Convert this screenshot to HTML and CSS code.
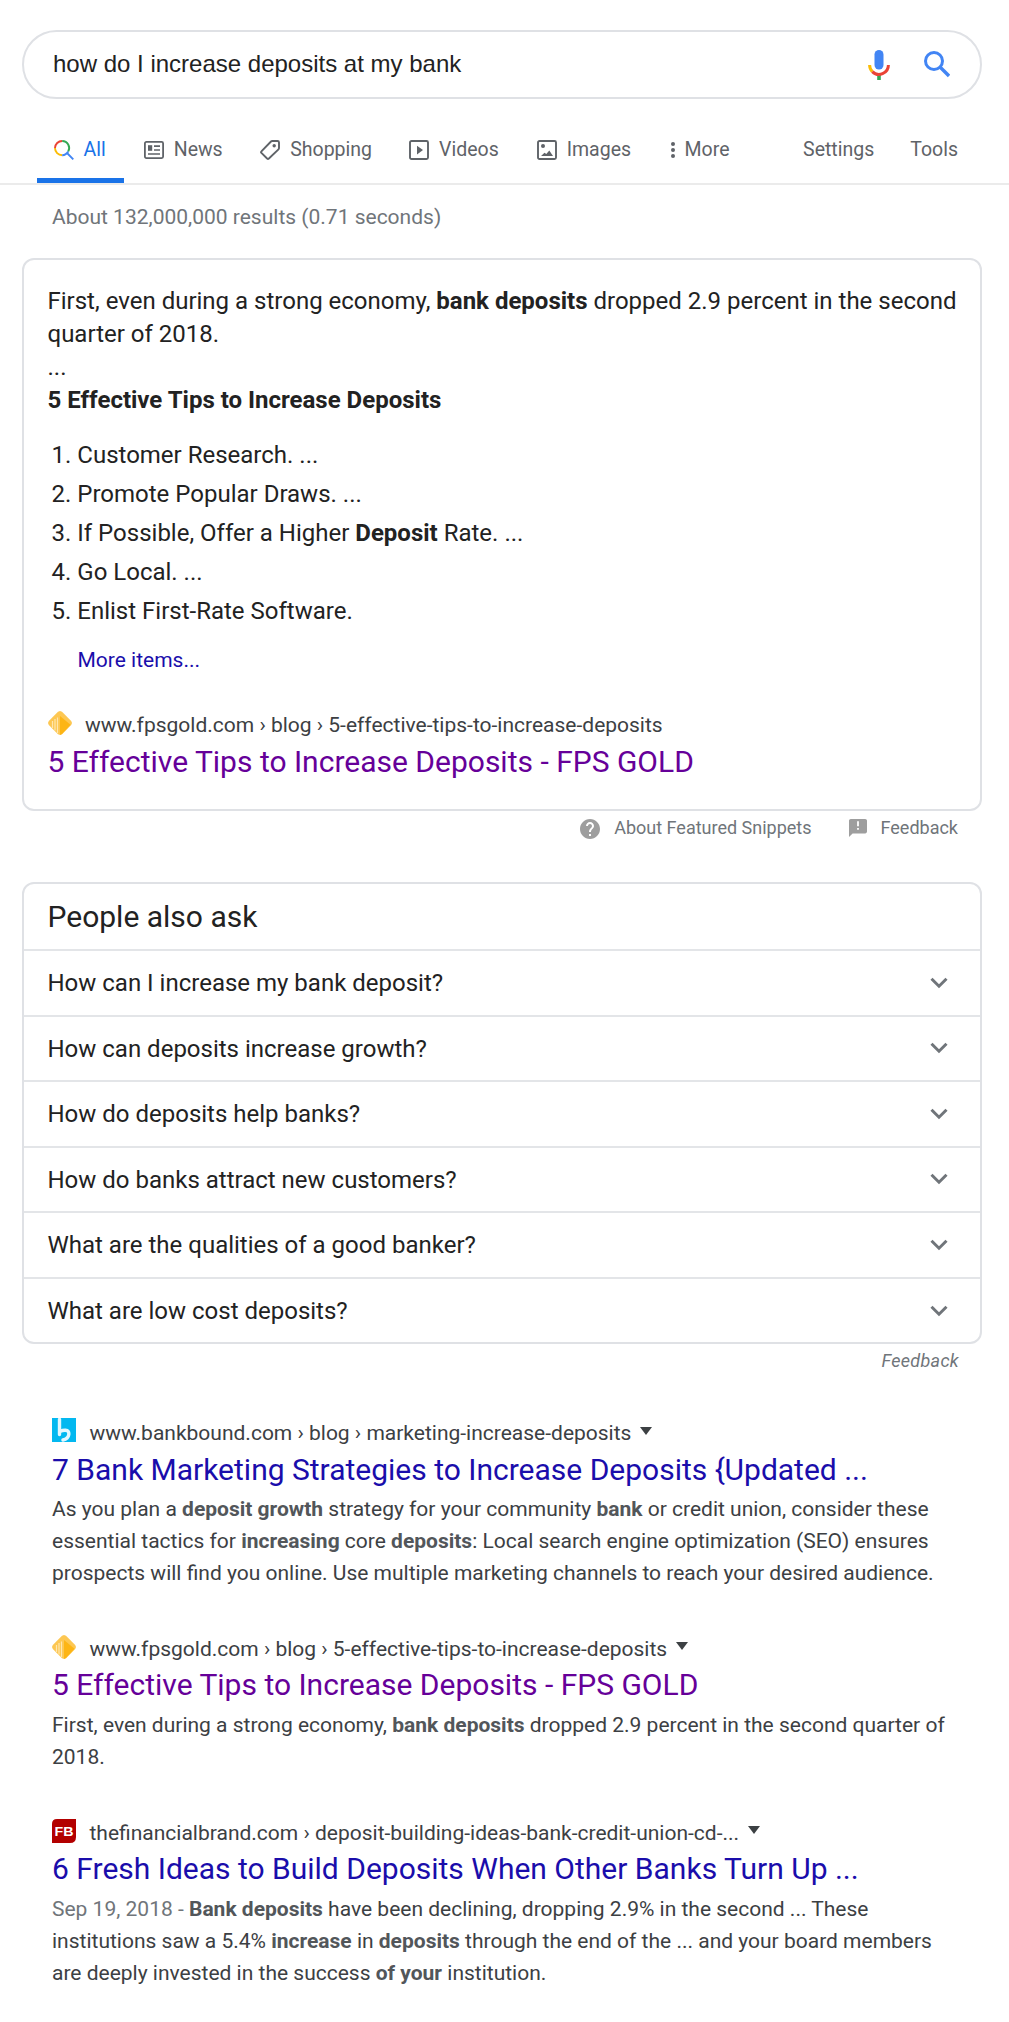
FILE: index.html
```html
<!DOCTYPE html>
<html lang="en">
<head>
<meta charset="utf-8">
<title>how do I increase deposits at my bank</title>
<link rel="stylesheet" href="styles.css">
</head>
<body>
<svg width="0" height="0" class="defs">
  <symbol id="gold" viewBox="0 0 24 24">
    <path d="M12 0l2 .8L23.2 10l.8 2-.8 2-9.2 9.2-2 .8-2-.8L.8 14 0 12l.8-2L10 .8z" fill="#fdc752"/>
    <path d="M12 5l10.500 8.800L14 23l-2 1z" fill="#fdb515"/>
    <path d="M4.500 10v7M7 8v11.500M9.500 6.500V22" stroke="#ffe6ae" stroke-width="1.200"/>
  </symbol>
  <symbol id="chev" viewBox="0 0 18 12">
    <path d="M1.500 1.700L9 9.200l7.500-7.500" fill="none" stroke="#70757a" stroke-width="3"/>
  </symbol>
</svg>
<header>
  <form class="search">
    <span class="query">how do I increase deposits at my bank</span>
    <svg class="mic" viewBox="0 0 22 30" width="22" height="30">
      <rect x="6.500" y="0" width="9" height="19.500" rx="4.500" fill="#4285f4"/>
      <path d="M9.200 25h3.600v5H9.200z" fill="#34a853"/>
      <path d="M1.600 15c0 2.600 1 4.900 2.700 6.600" fill="none" stroke="#fbbc05" stroke-width="3"/>
      <path d="M4.300 21.600A9.400 9.400 0 0 0 20.400 15" fill="none" stroke="#ea4335" stroke-width="3"/>
    </svg>
    <svg class="glass" viewBox="0 0 26 27" width="26" height="27">
      <circle cx="10" cy="10" r="8.500" fill="none" stroke="#4285f4" stroke-width="3"/>
      <path d="M16 16l9 9" stroke="#4285f4" stroke-width="3.400"/>
    </svg>
  </form>
  <nav class="tabs">
    <a class="tab active">
      <svg viewBox="0 0 20 20" width="20" height="20" fill="none" stroke-width="1.900">
        <path d="M1 8a7.200 7.200 0 0 1 7.200-7" stroke="#ea4335"/>
        <path d="M8.200 1a7 7 0 0 1 6 10.500" stroke="#34a853"/>
        <path d="M1 8a7.200 7.200 0 0 0 7.200 7.200" stroke="#fbbc05"/>
        <path d="M8.200 15.200a7 7 0 0 0 6-3.700M13 13l6.300 6.300" stroke="#4285f4"/>
      </svg>All</a>
    <a class="tab news">
      <svg viewBox="0 0 20 18" width="20" height="18" fill="none" stroke="#5f6368" stroke-width="1.800">
        <rect x=".9" y=".9" width="18.200" height="16.200" rx="1.500"/>
        <path d="M4 4.200h4.200V9.800H4z" fill="#5f6368" stroke="none"/>
        <path d="M10 5.200h6M10 9h6M4 13h12" stroke-width="1.700"/>
      </svg>News</a>
    <a class="tab shopping">
      <svg viewBox="0 0 20 20" width="20" height="20" fill="none" stroke="#5f6368" stroke-width="1.900">
        <path d="M1.400 11.400L11 1.500q.5-.5 1.200-.5H17.500Q19 1 19 2.500V8q0 .8-.5 1.300L8.900 18.500q-.9.800-1.800 0L1.400 12.900q-.8-.8 0-1.500z"/>
        <circle cx="14.200" cy="5.800" r="1.700" fill="#5f6368" stroke="none"/>
      </svg>Shopping</a>
    <a class="tab videos">
      <svg viewBox="0 0 20 20" width="20" height="20" fill="none" stroke="#5f6368" stroke-width="1.900">
        <rect x="1" y="1" width="18" height="18" rx="1.500"/>
        <path d="M8 5.800v8.600l6-4.300z" fill="#5f6368" stroke="none"/>
      </svg>Videos</a>
    <a class="tab images">
      <svg viewBox="0 0 20 20" width="20" height="20" fill="none" stroke="#5f6368" stroke-width="1.900">
        <rect x="1" y="1" width="18" height="18" rx="1.500"/>
        <circle cx="6" cy="6" r="2" fill="#5f6368" stroke="none"/>
        <path d="M4 16l3.500-3.200 1.800 1.200 3-3.500L16 16z" fill="#5f6368" stroke="none"/>
      </svg>Images</a>
    <a class="tab more">
      <svg viewBox="0 0 4 18" width="4" height="18" fill="#5f6368">
        <circle cx="2" cy="3" r="2"/><circle cx="2" cy="9" r="2"/><circle cx="2" cy="15" r="2"/>
      </svg>More</a>
    <a class="tab settings">Settings</a>
    <a class="tab tools">Tools</a>
  </nav>
</header>
<main>
  <p class="stats">About 132,000,000 results (0.71 seconds)</p>
  <section class="card snippet">
    <p>First, even during a strong economy, <b>bank deposits</b> dropped 2.9 percent in the second quarter of 2018.<br>...<br><b>5 Effective Tips to Increase Deposits</b></p>
    <ol>
      <li>Customer Research. ...</li>
      <li>Promote Popular Draws. ...</li>
      <li>If Possible, Offer a Higher <b>Deposit</b> Rate. ...</li>
      <li>Go Local. ...</li>
      <li>Enlist First-Rate Software.</li>
    </ol>
    <a class="more-items">More items...</a>
    <div class="source"><svg class="fav" width="24" height="24"><use href="#gold"/></svg><cite>www.fpsgold.com › blog › 5-effective-tips-to-increase-deposits</cite></div>
    <h3 class="visited">5 Effective Tips to Increase Deposits - FPS GOLD</h3>
  </section>
  <div class="card-links">
    <svg class="help" viewBox="2 2 20 20" width="20" height="20" fill="#9e9e9e"><path d="M12 2C6.480 2 2 6.480 2 12s4.480 10 10 10 10-4.480 10-10S17.520 2 12 2zm1 17h-2v-2h2v2zm2.070-7.750l-.9.920C13.450 12.900 13 13.500 13 15h-2v-.5c0-1.100.45-2.100 1.170-2.830l1.240-1.260c.37-.36.590-.86.590-1.410 0-1.100-.9-2-2-2s-2 .9-2 2H8c0-2.210 1.790-4 4-4s4 1.790 4 4c0 .88-.36 1.680-.93 2.250z"/></svg>
    <span class="about">About Featured Snippets</span>
    <svg class="flag" viewBox="2 2 20 20" width="18" height="18" fill="#9e9e9e"><path d="M20 2H4c-1.100 0-1.990.9-1.990 2L2 22l4-4h14c1.100 0 2-.9 2-2V4c0-1.100-.9-2-2-2zm-7 12h-2v-2h2v2zm0-4h-2V4.500h2V10z"/></svg>
    <span>Feedback</span>
  </div>
  <section class="card ask">
    <h2>People also ask</h2>
    <div class="question">How can I increase my bank deposit?<svg width="18" height="12"><use href="#chev"/></svg></div>
    <div class="question">How can deposits increase growth?<svg width="18" height="12"><use href="#chev"/></svg></div>
    <div class="question">How do deposits help banks?<svg width="18" height="12"><use href="#chev"/></svg></div>
    <div class="question">How do banks attract new customers?<svg width="18" height="12"><use href="#chev"/></svg></div>
    <div class="question">What are the qualities of a good banker?<svg width="18" height="12"><use href="#chev"/></svg></div>
    <div class="question">What are low cost deposits?<svg width="18" height="12"><use href="#chev"/></svg></div>
  </section>
  <p class="feedback">Feedback</p>
  <article class="result first">
    <div class="source"><svg class="fav" viewBox="0 0 24 24" width="24" height="24"><path d="M0 0h24v24H0z" fill="#03b8f0"/><path d="M7.500 1.500v15M8 13.500c2-1 4-1.300 5.500-1.200 2.600.2 3.600 1.900 3.300 4.200-.4 3-2.800 4.800-5.800 5.500" fill="none" stroke="#e4f7fe" stroke-width="3.400" stroke-linecap="round"/></svg><cite>www.bankbound.com › blog › marketing-increase-deposits</cite><i class="caret"></i></div>
    <h3>7 Bank Marketing Strategies to Increase Deposits {Updated ...</h3>
    <p>As you plan a <b>deposit growth</b> strategy for your community <b>bank</b> or credit union, consider these essential tactics for <b>increasing</b> core <b>deposits</b>: Local search engine optimization (SEO) ensures prospects will find you online. Use multiple marketing channels to reach your desired audience.</p>
  </article>
  <article class="result">
    <div class="source"><svg class="fav" width="24" height="24"><use href="#gold"/></svg><cite>www.fpsgold.com › blog › 5-effective-tips-to-increase-deposits</cite><i class="caret"></i></div>
    <h3 class="visited">5 Effective Tips to Increase Deposits - FPS GOLD</h3>
    <p>First, even during a strong economy, <b>bank deposits</b> dropped 2.9 percent in the second quarter of 2018.</p>
  </article>
  <article class="result">
    <div class="source"><svg class="fav" viewBox="0 0 24 24" width="24" height="24"><path d="M5 0h19v18q0 6-6 6H0V5q0-5 5-5z" fill="#b30000"/><text x="12" y="16.500" text-anchor="middle" class="fb" textLength="19" lengthAdjust="spacingAndGlyphs">FB</text></svg><cite>thefinancialbrand.com › deposit-building-ideas-bank-credit-union-cd-...</cite><i class="caret"></i></div>
    <h3>6 Fresh Ideas to Build Deposits When Other Banks Turn Up ...</h3>
    <p><span class="date">Sep 19, 2018 - </span><b>Bank deposits</b> have been declining, dropping 2.9% in the second ... These institutions saw a 5.4% <b>increase</b> in <b>deposits</b> through the end of the ... and your board members are deeply invested in the success <b>of your</b> institution.</p>
  </article>
</main>
</body>
</html>
```
FILE: styles.css
```css
* { box-sizing: border-box; }
body { margin: 0; background: #fff; color: #222; font: 24px/33px Roboto, sans-serif; }
p, h2, h3, ol { margin: 0; padding: 0; font-weight: 400; }
cite, i { font-style: normal; }
svg { flex: none; }
.defs { position: absolute; }

header { height: 185px; padding: 30px 27px 0 22px; border-bottom: 2px solid #ebebeb; }
.search { display: flex; align-items: center; height: 69px; border: 2px solid #dfe1e5; border-radius: 35px; padding: 0 30px 0 29px; }
.query { flex: 1; font: 24px/33px "Liberation Sans", Arial, sans-serif; color: #222; padding-bottom: 3px; }
.mic { margin-right: 34px; }
.search .glass { margin-top: -1px; }

.tabs { display: flex; height: 84px; padding-left: 15px; font-size: 19.5px; line-height: 24px; color: #5f6368; }
.tab { display: flex; align-items: center; gap: 10px; height: 84px; padding-top: 17px; }
.tab svg { display: block; }
.tab.active { gap: 9.5px; color: #1a73e8; border-bottom: 5px solid #1a73e8; padding: 22px 18px 0 17px; }
.news { margin-left: 20px; }
.shopping { margin-left: 37.5px; }
.videos { margin-left: 37px; }
.images { margin-left: 38px; }
.more { margin-left: 39.5px; }
.settings { margin-left: auto; }
.tools { margin-left: 36px; margin-right: 24px; }

main { padding: 0 27px 0 22px; }
.stats { padding: 17px 0 0 30px; height: 73px; font-size: 21px; line-height: 30px; color: #70757a; }
.card { border: 2px solid #dfe1e5; border-radius: 12px; }
.snippet { height: 553px; padding: 25px 20px 0 23.5px; }
.snippet ol { list-style: none; counter-reset: n; margin-top: 22px; padding-left: 4px; }
.snippet li { counter-increment: n; margin-bottom: 6px; white-space: pre; }
.snippet li::before { content: counter(n) ". "; }
.more-items { display: block; margin: 17px 0 0 30px; font-size: 21px; line-height: 30px; color: #1a0dab; }
.source { display: flex; align-items: center; height: 30px; font-size: 21px; line-height: 30px; color: #3c4043; white-space: nowrap; }
.fav { margin-right: 13.5px; margin-top: -4px; }
.first .fav { margin-top: -6px; }
.snippet .source { margin-top: 35px; }
h3 { margin-top: 1.5px; font-size: 30px; line-height: 39px; color: #1a0dab; white-space: nowrap; }
h3.visited { color: #609; }

.card-links { display: flex; align-items: center; justify-content: flex-end; height: 71px; padding: 0 24px 38px 0; font-size: 18px; line-height: 24px; color: #70757a; }
.about { margin: 0 37px 0 14px; }
.flag { margin-right: 14px; }
.help { margin-top: 2px; }

.ask { height: 462px; }
.ask h2 { height: 65px; padding: 16px 24px 0 23.5px; font-size: 30px; line-height: 33px; }
.question { display: flex; align-items: center; justify-content: space-between; height: 65.6px; padding: 1.5px 32px 0 23.5px; border-top: 2px solid #e3e5e8; }
.question svg { margin-top: -2px; }
.feedback { text-align: right; padding: 4px 23px 0 0; font-size: 18px; line-height: 26px; letter-spacing: .3px; font-style: italic; color: #70757a; height: 74px; }

.result { padding: 0 30px; margin-bottom: 44.6px; color: #3c4043; }
.result p { font-size: 21px; line-height: 32px; }
.result h3 { margin-bottom: 4.9px; }
.result b { color: #52565a; }
.result .date { color: #70757a; }
.caret { margin: -5px 0 0 9px; border: 6px solid transparent; border-top: 8px solid #3c4043; border-bottom: 0; }
.fb { font: bold 12.5px "Liberation Sans", sans-serif; fill: #fff; }
```
